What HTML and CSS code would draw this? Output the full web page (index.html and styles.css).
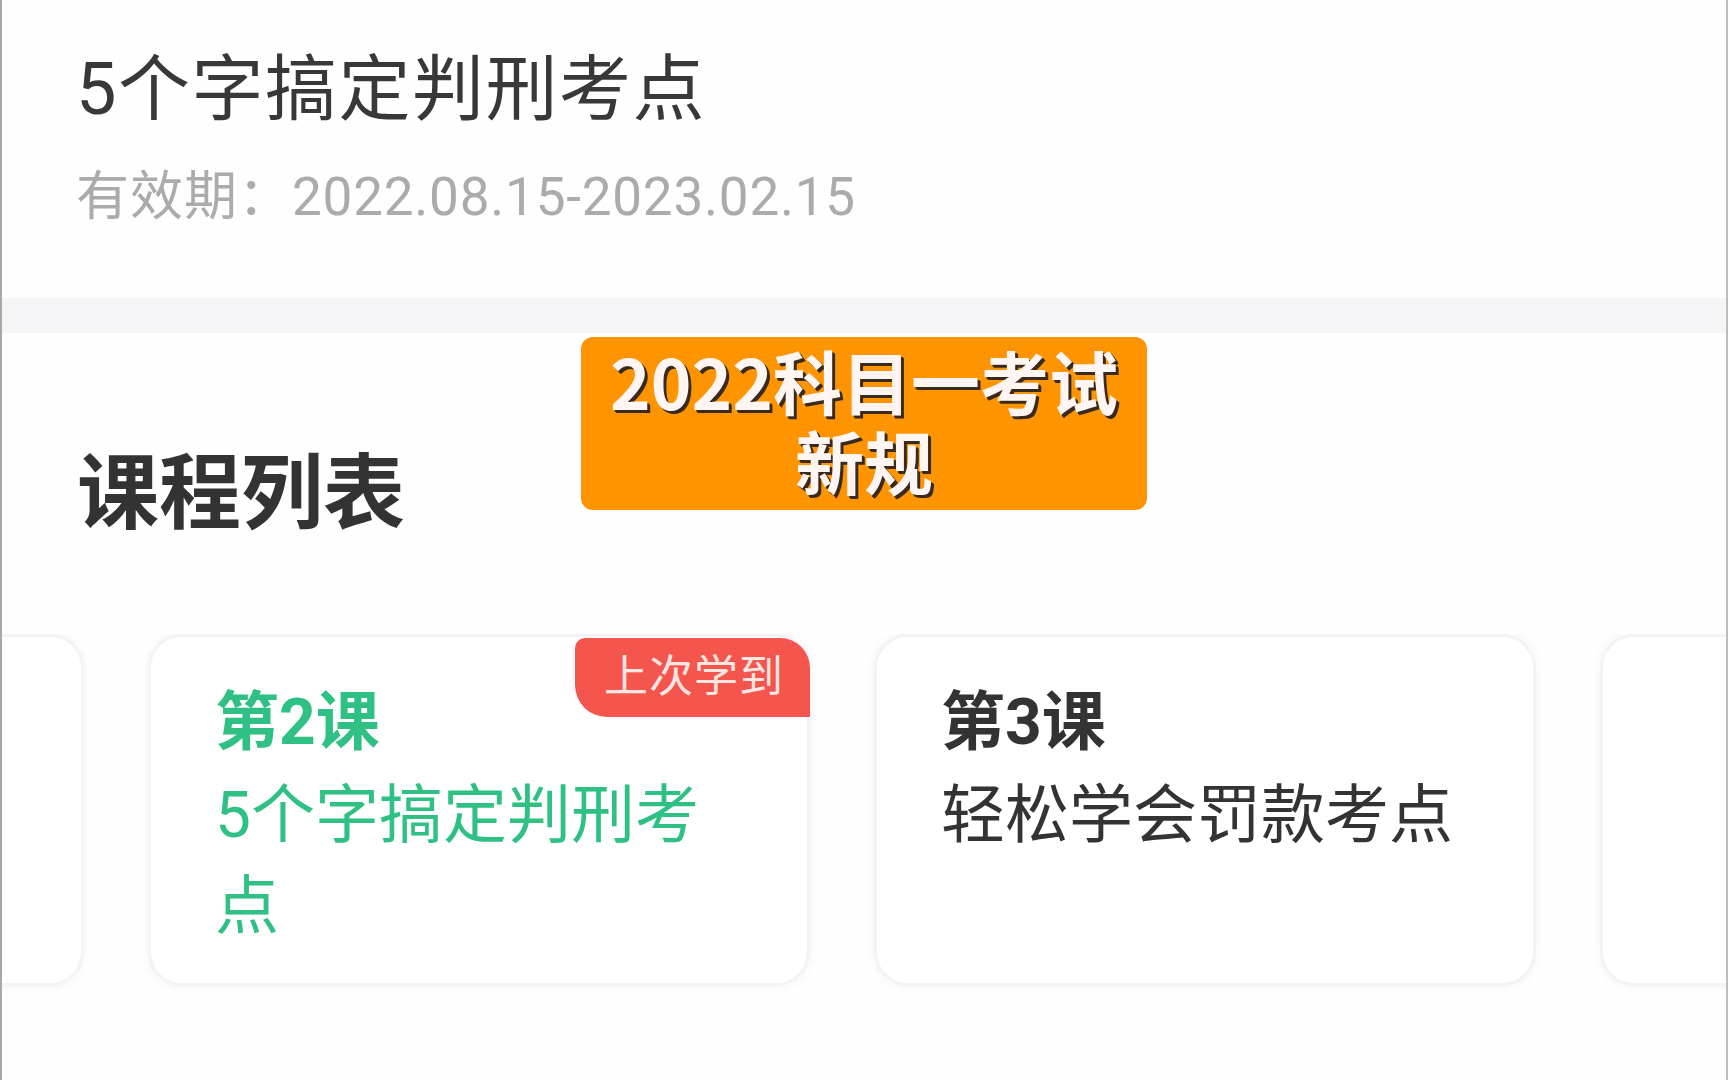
FILE: index.html
```html
<!DOCTYPE html>
<html lang="zh-CN">
<head>
<meta charset="utf-8">
<title>课程列表</title>
<link rel="stylesheet" href="styles.css">
</head>
<body>
<div class="screen">
  <section class="course-head">
    <h1 class="course-title">5个字搞定判刑考点</h1>
    <p class="validity"><span class="validity-label">有效期：</span>2022.08.15-2023.02.15</p>
  </section>
  <div class="divider"></div>
  <section class="lessons">
    <h2 class="section-title">课程列表</h2>
    <div class="lesson-viewport">
      <div class="lesson-track">
        <div class="lesson-card"></div>
        <div class="lesson-card is-current">
          <span class="last-badge">上次学到</span>
          <div class="lesson-no">第2课</div>
          <div class="lesson-name">5个字搞定判刑考点</div>
        </div>
        <div class="lesson-card">
          <div class="lesson-no">第3课</div>
          <div class="lesson-name">轻松学会罚款考点</div>
        </div>
        <div class="lesson-card"></div>
      </div>
    </div>
  </section>
  <div class="caption">2022科目一考试<br>新规</div>
</div>
</body>
</html>
```
FILE: styles.css
```css
html, body {
  margin: 0;
  padding: 0;
  background: #ffffff;
}
body {
  font-family: Roboto, "Noto Sans CJK SC", sans-serif;
  color: #333333;
}
.screen {
  position: relative;
  width: 1728px;
  height: 1080px;
  box-sizing: border-box;
  border-left: 2px solid #a8a8a8;
  border-right: 2px solid #bdbdbd;
  background: #fefefe;
  overflow: hidden;
}
.course-head {
  padding: 45px 0 0 74px;
  height: 253px;
}
.course-title {
  margin: 0;
  font-size: 72px;
  line-height: 90px;
  font-weight: 400;
  letter-spacing: 1.5px;
  color: #383838;
}
.validity {
  margin: 30px 0 0;
  font-size: 53px;
  line-height: 64px;
  letter-spacing: 0.8px;
  color: #ababab;
}
.validity-label {
  letter-spacing: 1px;
}
.divider {
  height: 35px;
  background: #f5f5f8;
}
.section-title {
  margin: 111px 0 0 75px;
  font-size: 82px;
  line-height: 100px;
  font-weight: 700;
  color: #333333;
}
.lesson-viewport {
  margin-top: 90px;
  overflow: hidden;
  height: 380px;
}
.lesson-track {
  display: flex;
  gap: 64px;
  margin-left: -580px;
}
.lesson-card {
  position: relative;
  flex: 0 0 662px;
  height: 352px;
  box-sizing: border-box;
  border: 3px solid #f3f3f7;
  border-radius: 34px;
  padding: 40px 68px 0 64px;
  background: #ffffff;
  box-shadow: 0 0 8px rgba(215, 215, 230, 0.3);
}
.lesson-no {
  font-size: 64px;
  line-height: 92px;
  font-weight: 700;
  color: #333333;
}
.lesson-name {
  margin-top: 1px;
  font-size: 64px;
  line-height: 91px;
  color: #333333;
}
.is-current .lesson-no,
.is-current .lesson-name {
  color: #2fc083;
}
.last-badge {
  position: absolute;
  top: 1px;
  right: -3px;
  width: 235px;
  height: 79px;
  box-sizing: border-box;
  padding-left: 29px;
  background: #f4564e;
  border-radius: 10px 30px 0 32px;
  color: #ffe6e2;
  font-size: 44px;
  line-height: 79px;
  letter-spacing: 1px;
}
.caption {
  position: absolute;
  left: 579px;
  top: 337px;
  width: 566px;
  height: 173px;
  box-sizing: border-box;
  padding-top: 3px;
  background: #fe9400;
  border-radius: 12px;
  text-align: center;
  font-family: "Noto Sans CJK SC", sans-serif;
  font-weight: 700;
  font-size: 69px;
  line-height: 80px;
  color: #fff6f4;
  text-shadow: 2px 2px 0 #3a2a1c, 3px 3px 0 #3a2a1c;
}
```
